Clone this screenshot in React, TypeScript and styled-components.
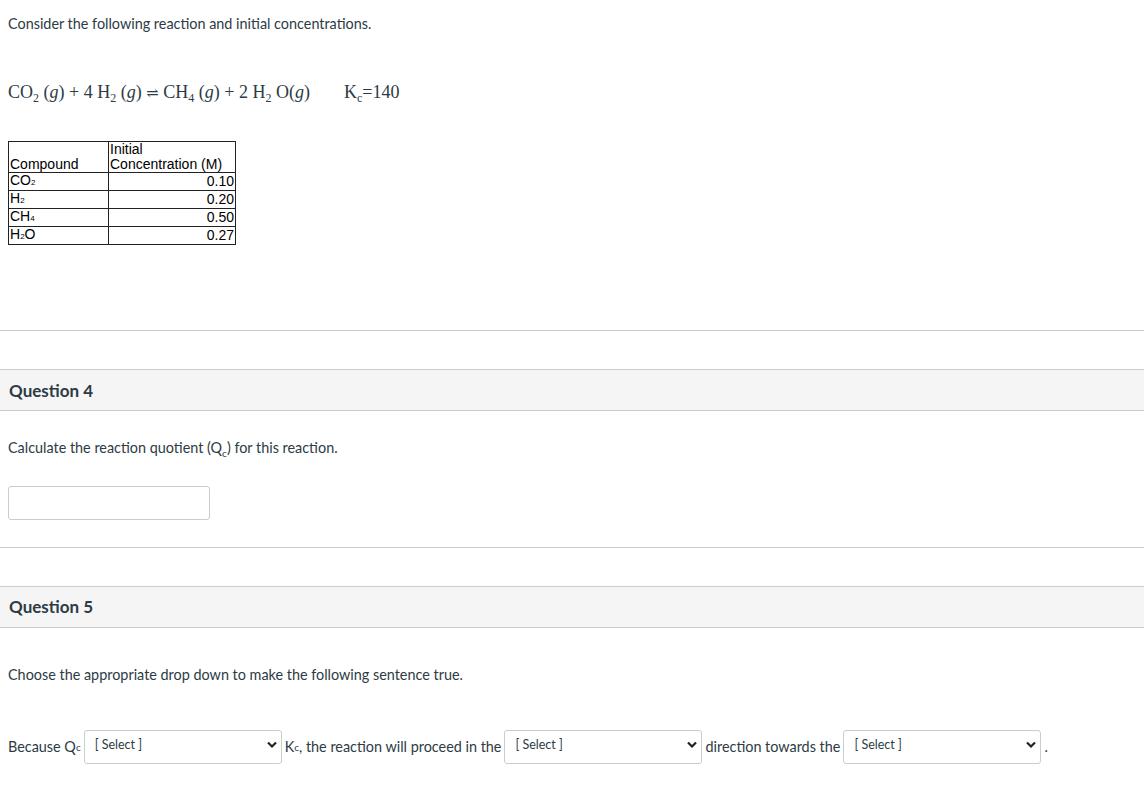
import React from "react";
import styled, { createGlobalStyle } from "styled-components";

const Global = createGlobalStyle`
  body { margin: 0; font-family: Lato, "Open Sans", sans-serif; color: #2d3b45; font-size: 14.4px; background: #fff; }
`;
const Page = styled.div`display: flex; flex-direction: column; align-items: flex-start;`;
const Para = styled.p<{ $top: number }>`margin: ${p => p.$top}px 0 0 8px; line-height: 18px; font-size: 14.4px;`;
const Eq = styled.div`margin: 47px 0 0 8px; font-family: "Liberation Serif", "DejaVu Serif", serif; font-size: 18px; white-space: pre; line-height: 24px;`;
const I = styled.i``;
const Sub = styled.sub`font-size: 12px; vertical-align: -4px;`;
const Kc = styled.span`margin-left: 34px;`;
const Table = styled.table`margin: 31px 0 0 8px; border-collapse: collapse; font-family: "Liberation Sans", Arial, sans-serif; font-size: 14px; color: #000; border: 1.5px solid #222;
  td { border: 1px solid #222; padding: 0 1px; line-height: 15px; height: 15px; }
  td.n { text-align: right; }
  small { font-size: 8px; }
`;
const Hr = styled.div<{ $top: number }>`align-self: stretch; margin-top: ${p => p.$top}px; border-top: 1px solid #c7cdd1;`;
const Header = styled.div<{ $top: number }>`align-self: stretch; margin-top: ${p => p.$top}px; height: 40px; background: #f5f5f5; border-top: 1px solid #c7cdd1; border-bottom: 1px solid #c7cdd1; display: flex; align-items: center; padding-left: 9px; font-size: 17px; font-weight: 700; color: #2d3b45;`;
const Input = styled.div`margin: 24px 0 0 8px; width: 202px; height: 34px; border: 1px solid #c7cdd1; border-radius: 3px; box-sizing: border-box;`;
const Row = styled.div`margin: 46px 0 0 8px; display: flex; align-items: center; font-size: 14.4px; white-space: pre;`;
const Select = styled.div<{ $w: number }>`width: ${p => p.$w}px; height: 34px; box-sizing: border-box; border: 1px solid #c7cdd1; border-radius: 3px; display: flex; justify-content: space-between; padding: 6px 4px 0 10px; margin: 0 3px 0 3px; font-size: 12.5px; color: #2d3b45;`;
const Chev = styled.svg`margin-top: 4px;`;
const S = styled.sub`font-size: 10px;`;

const Sel = ({ w }: { w: number }) => (
  <Select $w={w}><span>[ Select ]</span><Chev width="10" height="8" viewBox="0 0 10 8"><path d="M1 1.5 L5 5.5 L9 1.5" stroke="#222" strokeWidth="2.2" fill="none" /></Chev></Select>
);

export default function App() {
  return (
    <Page>
      <Global />
      <Para $top={15}>Consider the following reaction and initial concentrations.</Para>
      <Eq>
        CO<Sub>2</Sub> (<I>g</I>) + 4 H<Sub>2</Sub> (<I>g</I>) <span style={{ fontSize: 15 }}>⇌</span> CH<Sub>4</Sub> (<I>g</I>) + 2 H<Sub>2</Sub> O(<I>g</I>)
        <Kc>K<Sub>c</Sub>=140</Kc>
      </Eq>
      <Table>
        <tbody>
          <tr><td style={{ width: 97, verticalAlign: "bottom" }}>Compound</td><td style={{ width: 124 }}>Initial<br />Concentration (M)</td></tr>
          <tr><td>CO<small>2</small></td><td className="n">0.10</td></tr>
          <tr><td>H<small>2</small></td><td className="n">0.20</td></tr>
          <tr><td>CH<small>4</small></td><td className="n">0.50</td></tr>
          <tr><td>H<small>2</small>O</td><td className="n">0.27</td></tr>
        </tbody>
      </Table>
      <Hr $top={85} />
      <Header $top={38}>Question 4</Header>
      <Para $top={28}>Calculate the reaction quotient (Q<S>c</S>) for this reaction.</Para>
      <Input />
      <Hr $top={27} />
      <Header $top={38}>Question 5</Header>
      <Para $top={38}>Choose the appropriate drop down to make the following sentence true.</Para>
      <Row>
        Because Q<S>c</S><Sel w={198} />K<S>c</S>, the reaction will proceed in the<Sel w={198} />direction towards the<Sel w={198} />.
      </Row>
    </Page>
  );
}
